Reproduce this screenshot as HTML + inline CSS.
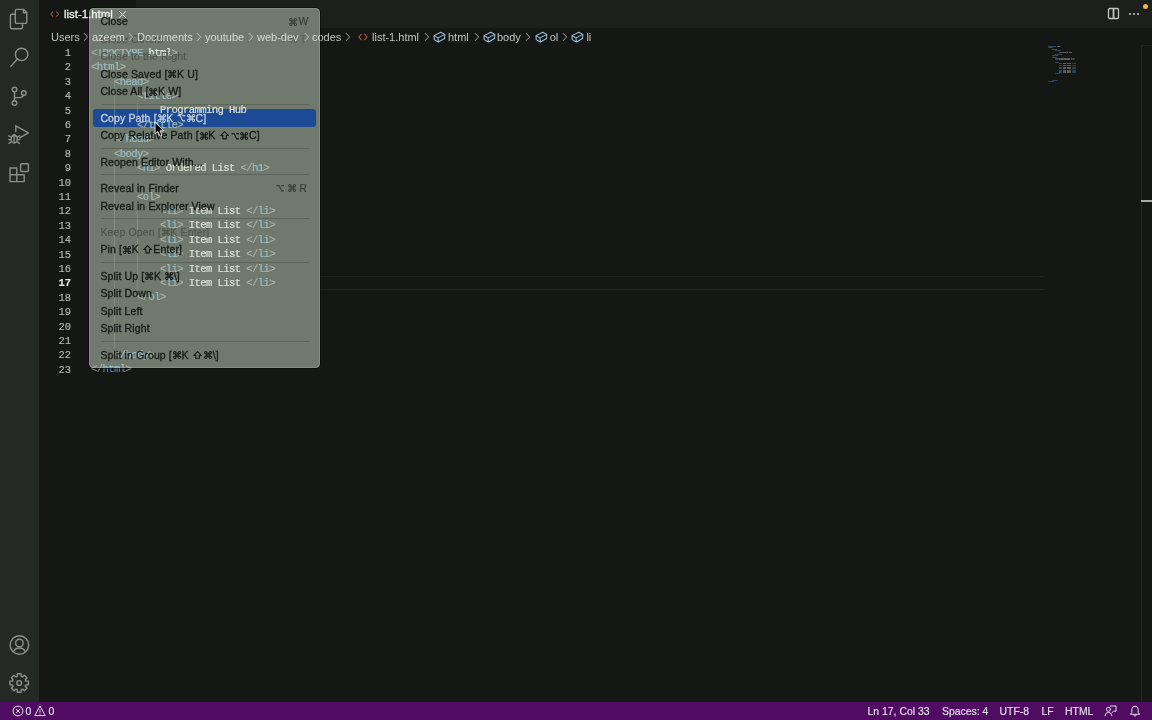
<!DOCTYPE html>
<html>
<head>
<meta charset="utf-8">
<style>
*{margin:0;padding:0;box-sizing:border-box}
html,body{width:1152px;height:720px;overflow:hidden;background:#151714;font-family:"Liberation Sans",sans-serif;position:relative}
body{will-change:transform}
.abs{position:absolute}
#act{left:0;top:0;width:39px;height:702px;background:#252925}
#tabs{left:39px;top:0;width:1113px;height:28px;background:#1d1f1d}
#tab{left:39px;top:0;width:97px;height:28px;background:#151714}
#status{left:0;top:702px;width:1152px;height:18px;background:#4f0c60;color:#e4d8ec;font-size:10.4px}
.st{top:705.9px;font-size:10.45px;-webkit-text-stroke:0.15px #e6dcee;color:#e6dcee;white-space:pre}
.ln{position:absolute;left:30px;width:41px;text-align:right;font-size:10.5px;line-height:14.39px;color:#b8bab7;font-family:"Liberation Mono",monospace;margin-top:0.3px;-webkit-text-stroke:0.12px currentColor}
.ln.cur{color:#e6e6e6;font-weight:bold}
.codewrap{position:absolute;left:0;top:0;width:1152px;height:720px}
.cl{position:absolute;left:91px;font-size:10.6px;letter-spacing:-0.61px;-webkit-text-stroke:0.22px currentColor;line-height:14.39px;white-space:pre;font-family:"Liberation Mono",monospace}
.base .p{color:#7f817f} .base .t{color:#4a7cb4} .base .a{color:#8fb8d8} .base .x{color:#d4d4d4}
.over .p{color:#a8b0a4} .over .t{color:#9cbcc0} .over .a{color:#e2e8e0} .over .x{color:#dadfd4}
.bcw{position:absolute;top:30.5px;font-size:11px;white-space:pre}
#menu{left:89px;top:8px;width:231px;height:360px;background:#6f796d;border-radius:4.5px;overflow:hidden;box-shadow:0 0 0 1px rgba(0,0,0,0.4)}
#rim{left:89px;top:8px;width:231px;height:360px;border-radius:4.5px;box-shadow:inset 0 0 0 1px rgba(200,210,195,0.25)}
#menu .inner{position:absolute;left:-89px;top:-8px;width:1152px;height:720px}
.mi{position:absolute;left:100.4px;-webkit-text-stroke:0.3px currentColor;letter-spacing:0.13px;font-size:10.5px;color:#1c201c;white-space:pre;line-height:12px}
.mi.dis{color:#4e564d}
.mi.hl{color:#cfd8e6}
.sc{position:absolute;-webkit-text-stroke:0.2px currentColor;font-size:10.5px;color:#3a403a;white-space:pre;line-height:12px}
.sep{position:absolute;left:101px;width:208px;height:1.2px;background:#5c6459}
#hl{left:93px;width:223px;height:17.3px;background:#1c4a95;border-radius:3px}
</style>
</head>
<body>
<div id="act" class="abs"></div>

<svg class="abs" style="left:0;top:0" width="38" height="702" viewBox="0 0 38 702" fill="none" stroke="#8c908c" stroke-width="1.4" stroke-linejoin="round" stroke-linecap="round">
 <!-- files -->
 <path d="M16.8 9.4 H23.6 L26.8 12.6 V21.9 Q26.8 23.4 25.3 23.4 H16.8 Q15.3 23.4 15.3 21.9 V10.9 Q15.3 9.4 16.8 9.4 Z"/>
 <path d="M23.4 9.6 V12.8 H26.6"/>
 <path d="M15.3 14.3 H12 Q10.4 14.3 10.4 15.9 V27.2 Q10.4 28.8 12 28.8 H20.9 Q22.5 28.8 22.5 27.2 V23.4"/>
 <!-- search -->
 <circle cx="21.6" cy="54.4" r="6.2"/>
 <path d="M17.3 59 L10.9 66.4"/>
 <!-- scm -->
 <circle cx="14.5" cy="89.5" r="2.3"/>
 <circle cx="14.5" cy="103" r="2.3"/>
 <circle cx="23.8" cy="93" r="2.3"/>
 <path d="M14.5 91.8 V100.7"/>
 <path d="M23.5 95.3 Q22.8 97.4 20 97.6 H14.6"/>
 <!-- run debug -->
 <path d="M15.8 125.8 L28.4 132.8 L19.8 137.8 M15.8 125.8 V131.5"/>
 <ellipse cx="14.2" cy="139.3" rx="3.1" ry="3.7"/>
 <path d="M11 137 L8.8 135.8 M17.4 137 L19.6 135.8 M10.6 139.6 H8.6 M17.8 139.6 H19.8 M11 142 L9 143.4 M17.4 142 L19.4 143.4 M12.2 135.9 Q14.2 133.6 16.2 135.9 M14.2 136 V142.6"/>
 <!-- extensions -->
 <path d="M10 168 H16.8 V181.6 H10 Z M10 174.8 H24.2 V181.6 H16.8"/>
 <rect x="20.6" y="163.7" width="7.8" height="7.8" rx="1"/>
 <!-- account -->
 <circle cx="19.4" cy="645" r="9.3"/>
 <circle cx="19.4" cy="643" r="3.8"/>
 <path d="M13.6 651.6 Q15 648 19.4 648 Q23.8 648 25.2 651.6"/>
 <!-- gear -->
 <circle cx="19.2" cy="683" r="2.4"/>
</svg>
<svg class="abs" style="left:0;top:0" width="38" height="702" fill="none" stroke="#8c908c" stroke-width="1.4" stroke-linejoin="round"><path d="M28.42 681.17 L28.42 684.83 L25.80 685.00 L25.29 686.25 L27.02 688.22 L24.42 690.82 L22.45 689.09 L21.20 689.60 L21.03 692.22 L17.37 692.22 L17.20 689.60 L15.95 689.09 L13.98 690.82 L11.38 688.22 L13.11 686.25 L12.60 685.00 L9.98 684.83 L9.98 681.17 L12.60 681.00 L13.11 679.75 L11.38 677.78 L13.98 675.18 L15.95 676.91 L17.20 676.40 L17.37 673.78 L21.03 673.78 L21.20 676.40 L22.45 676.91 L24.42 675.18 L27.02 677.78 L25.29 679.75 L25.80 681.00 Z"/></svg>
<div id="tabs" class="abs"></div>
<div id="tab" class="abs"></div>
<div id="status" class="abs"></div>
<svg class="abs" style="left:11.5px;top:704.8px" width="12" height="12" viewBox="0 0 12 12" fill="none" stroke="#e6dcee" stroke-width="1"><circle cx="6" cy="6" r="4.9"/><path d="M4 4 L8 8 M8 4 L4 8"/></svg><span class="abs st" style="left:25.5px">0</span><svg class="abs" style="left:34.3px;top:704.6px" width="12" height="12" viewBox="0 0 12 12" fill="none" stroke="#e6dcee" stroke-width="1" stroke-linejoin="round"><path d="M6 1 L11.2 10.6 H0.8 Z"/><path d="M6 4.6 V7.6 M6 8.6 V9.4"/></svg><span class="abs st" style="left:48.5px">0</span><span class="abs st" style="left:867.5px">Ln 17, Col 33</span><span class="abs st" style="left:942px">Spaces: 4</span><span class="abs st" style="left:999.5px">UTF-8</span><span class="abs st" style="left:1041.5px">LF</span><span class="abs st" style="left:1065px">HTML</span><svg class="abs" style="left:1104px;top:705px" width="13" height="12" viewBox="0 0 13 12" fill="none" stroke="#e6dcee" stroke-width="1" stroke-linejoin="round" stroke-linecap="round"><circle cx="4.5" cy="4.3" r="2"/><path d="M1 10.8 Q1.5 7.3 4.5 7.3 Q7.5 7.3 8 10.8"/><path d="M6.5 1 H12 V6.2 H9.5 L8 7.6"/></svg><svg class="abs" style="left:1129px;top:705px" width="12" height="12" viewBox="0 0 12 12" fill="none" stroke="#e6dcee" stroke-width="1" stroke-linejoin="round"><path d="M6 1.2 Q9.2 1.2 9.2 4.6 V7.6 L10.6 9.3 H1.4 L2.8 7.6 V4.6 Q2.8 1.2 6 1.2 Z"/><path d="M4.6 10.4 Q6 11.8 7.4 10.4"/></svg>
<svg class="abs" style="left:1107px;top:7px" width="13" height="13" viewBox="0 0 13 13" fill="none" stroke="#c4c6c4" stroke-width="1.3"><rect x="1.5" y="1.5" width="10" height="10" rx="1.2"/><path d="M6.5 1.5 V11.5" stroke-width="1.8"/></svg><div class="abs" style="left:1129.2px;top:13.2px;width:1.6px;height:1.6px;background:#c4c6c4;border-radius:1px"></div><div class="abs" style="left:1133.2px;top:13.2px;width:1.6px;height:1.6px;background:#c4c6c4;border-radius:1px"></div><div class="abs" style="left:1137.2px;top:13.2px;width:1.6px;height:1.6px;background:#c4c6c4;border-radius:1px"></div><div class="abs" style="left:1142.8px;top:3.7px;width:5.6px;height:5.6px;border-radius:3px;background:#ecb444"></div>
<div class="abs" style="left:320px;top:276.3px;width:724px;height:13.6px;border-top:1px solid #222422;border-bottom:1px solid #222422"></div>
<div class="abs" style="left:1140.5px;top:45px;width:1.2px;height:657px;background:#262826"></div>
<div class="abs" style="left:1141px;top:45px;width:11px;height:1px;background:#1f211f"></div>
<div class="abs" style="left:1141px;top:200px;width:11px;height:2px;background:#a8aaa8"></div>
<div class="abs" style="left:1048.00px;top:45.50px;width:0.88px;height:1.1px;background:#3a3c3a"></div><div class="abs" style="left:1048.88px;top:45.50px;width:7.04px;height:1.1px;background:#2e4a62"></div><div class="abs" style="left:1056.80px;top:45.50px;width:3.52px;height:1.1px;background:#4a6478"></div><div class="abs" style="left:1060.32px;top:45.50px;width:0.88px;height:1.1px;background:#3a3c3a"></div><div class="abs" style="left:1048.00px;top:47.12px;width:0.88px;height:1.1px;background:#3a3c3a"></div><div class="abs" style="left:1048.88px;top:47.12px;width:3.52px;height:1.1px;background:#2e4a62"></div><div class="abs" style="left:1052.40px;top:47.12px;width:0.88px;height:1.1px;background:#3a3c3a"></div><div class="abs" style="left:1051.52px;top:48.74px;width:0.88px;height:1.1px;background:#3a3c3a"></div><div class="abs" style="left:1052.40px;top:48.74px;width:3.52px;height:1.1px;background:#2e4a62"></div><div class="abs" style="left:1055.92px;top:48.74px;width:0.88px;height:1.1px;background:#3a3c3a"></div><div class="abs" style="left:1055.04px;top:50.36px;width:0.88px;height:1.1px;background:#3a3c3a"></div><div class="abs" style="left:1055.92px;top:50.36px;width:4.40px;height:1.1px;background:#2e4a62"></div><div class="abs" style="left:1060.32px;top:50.36px;width:0.88px;height:1.1px;background:#3a3c3a"></div><div class="abs" style="left:1058.56px;top:51.98px;width:9.68px;height:1.1px;background:#5a5c58"></div><div class="abs" style="left:1069.12px;top:51.98px;width:2.64px;height:1.1px;background:#5a5c58"></div><div class="abs" style="left:1055.04px;top:53.60px;width:1.76px;height:1.1px;background:#3a3c3a"></div><div class="abs" style="left:1056.80px;top:53.60px;width:4.40px;height:1.1px;background:#2e4a62"></div><div class="abs" style="left:1061.20px;top:53.60px;width:0.88px;height:1.1px;background:#3a3c3a"></div><div class="abs" style="left:1051.52px;top:55.22px;width:1.76px;height:1.1px;background:#3a3c3a"></div><div class="abs" style="left:1053.28px;top:55.22px;width:3.52px;height:1.1px;background:#2e4a62"></div><div class="abs" style="left:1056.80px;top:55.22px;width:0.88px;height:1.1px;background:#3a3c3a"></div><div class="abs" style="left:1051.52px;top:56.84px;width:0.88px;height:1.1px;background:#3a3c3a"></div><div class="abs" style="left:1052.40px;top:56.84px;width:3.52px;height:1.1px;background:#2e4a62"></div><div class="abs" style="left:1055.92px;top:56.84px;width:0.88px;height:1.1px;background:#3a3c3a"></div><div class="abs" style="left:1055.04px;top:58.46px;width:0.88px;height:1.1px;background:#3a3c3a"></div><div class="abs" style="left:1055.92px;top:58.46px;width:1.76px;height:1.1px;background:#2e4a62"></div><div class="abs" style="left:1057.68px;top:58.46px;width:0.88px;height:1.1px;background:#3a3c3a"></div><div class="abs" style="left:1059.44px;top:58.46px;width:6.16px;height:1.1px;background:#5a5c58"></div><div class="abs" style="left:1066.48px;top:58.46px;width:3.52px;height:1.1px;background:#5a5c58"></div><div class="abs" style="left:1070.88px;top:58.46px;width:1.76px;height:1.1px;background:#3a3c3a"></div><div class="abs" style="left:1072.64px;top:58.46px;width:1.76px;height:1.1px;background:#2e4a62"></div><div class="abs" style="left:1074.40px;top:58.46px;width:0.88px;height:1.1px;background:#3a3c3a"></div><div class="abs" style="left:1055.04px;top:61.70px;width:0.88px;height:1.1px;background:#3a3c3a"></div><div class="abs" style="left:1055.92px;top:61.70px;width:1.76px;height:1.1px;background:#2e4a62"></div><div class="abs" style="left:1057.68px;top:61.70px;width:0.88px;height:1.1px;background:#3a3c3a"></div><div class="abs" style="left:1058.56px;top:63.32px;width:0.88px;height:1.1px;background:#3a3c3a"></div><div class="abs" style="left:1059.44px;top:63.32px;width:1.76px;height:1.1px;background:#2e4a62"></div><div class="abs" style="left:1061.20px;top:63.32px;width:0.88px;height:1.1px;background:#3a3c3a"></div><div class="abs" style="left:1062.96px;top:63.32px;width:3.52px;height:1.1px;background:#5a5c58"></div><div class="abs" style="left:1067.36px;top:63.32px;width:3.52px;height:1.1px;background:#5a5c58"></div><div class="abs" style="left:1071.76px;top:63.32px;width:1.76px;height:1.1px;background:#3a3c3a"></div><div class="abs" style="left:1073.52px;top:63.32px;width:1.76px;height:1.1px;background:#2e4a62"></div><div class="abs" style="left:1075.28px;top:63.32px;width:0.88px;height:1.1px;background:#3a3c3a"></div><div class="abs" style="left:1058.56px;top:64.94px;width:0.88px;height:1.1px;background:#3a3c3a"></div><div class="abs" style="left:1059.44px;top:64.94px;width:1.76px;height:1.1px;background:#2e4a62"></div><div class="abs" style="left:1061.20px;top:64.94px;width:0.88px;height:1.1px;background:#3a3c3a"></div><div class="abs" style="left:1062.96px;top:64.94px;width:3.52px;height:1.1px;background:#5a5c58"></div><div class="abs" style="left:1067.36px;top:64.94px;width:3.52px;height:1.1px;background:#5a5c58"></div><div class="abs" style="left:1071.76px;top:64.94px;width:1.76px;height:1.1px;background:#3a3c3a"></div><div class="abs" style="left:1073.52px;top:64.94px;width:1.76px;height:1.1px;background:#2e4a62"></div><div class="abs" style="left:1075.28px;top:64.94px;width:0.88px;height:1.1px;background:#3a3c3a"></div><div class="abs" style="left:1058.56px;top:66.56px;width:0.88px;height:1.1px;background:#3a3c3a"></div><div class="abs" style="left:1059.44px;top:66.56px;width:1.76px;height:1.1px;background:#2e4a62"></div><div class="abs" style="left:1061.20px;top:66.56px;width:0.88px;height:1.1px;background:#3a3c3a"></div><div class="abs" style="left:1062.96px;top:66.56px;width:3.52px;height:1.1px;background:#5a5c58"></div><div class="abs" style="left:1067.36px;top:66.56px;width:3.52px;height:1.1px;background:#5a5c58"></div><div class="abs" style="left:1071.76px;top:66.56px;width:1.76px;height:1.1px;background:#3a3c3a"></div><div class="abs" style="left:1073.52px;top:66.56px;width:1.76px;height:1.1px;background:#2e4a62"></div><div class="abs" style="left:1075.28px;top:66.56px;width:0.88px;height:1.1px;background:#3a3c3a"></div><div class="abs" style="left:1058.56px;top:68.18px;width:0.88px;height:1.1px;background:#3a3c3a"></div><div class="abs" style="left:1059.44px;top:68.18px;width:1.76px;height:1.1px;background:#2e4a62"></div><div class="abs" style="left:1061.20px;top:68.18px;width:0.88px;height:1.1px;background:#3a3c3a"></div><div class="abs" style="left:1062.96px;top:68.18px;width:3.52px;height:1.1px;background:#5a5c58"></div><div class="abs" style="left:1067.36px;top:68.18px;width:3.52px;height:1.1px;background:#5a5c58"></div><div class="abs" style="left:1071.76px;top:68.18px;width:1.76px;height:1.1px;background:#3a3c3a"></div><div class="abs" style="left:1073.52px;top:68.18px;width:1.76px;height:1.1px;background:#2e4a62"></div><div class="abs" style="left:1075.28px;top:68.18px;width:0.88px;height:1.1px;background:#3a3c3a"></div><div class="abs" style="left:1058.56px;top:69.80px;width:0.88px;height:1.1px;background:#3a3c3a"></div><div class="abs" style="left:1059.44px;top:69.80px;width:1.76px;height:1.1px;background:#2e4a62"></div><div class="abs" style="left:1061.20px;top:69.80px;width:0.88px;height:1.1px;background:#3a3c3a"></div><div class="abs" style="left:1062.96px;top:69.80px;width:3.52px;height:1.1px;background:#5a5c58"></div><div class="abs" style="left:1067.36px;top:69.80px;width:3.52px;height:1.1px;background:#5a5c58"></div><div class="abs" style="left:1071.76px;top:69.80px;width:1.76px;height:1.1px;background:#3a3c3a"></div><div class="abs" style="left:1073.52px;top:69.80px;width:1.76px;height:1.1px;background:#2e4a62"></div><div class="abs" style="left:1075.28px;top:69.80px;width:0.88px;height:1.1px;background:#3a3c3a"></div><div class="abs" style="left:1058.56px;top:71.42px;width:0.88px;height:1.1px;background:#3a3c3a"></div><div class="abs" style="left:1059.44px;top:71.42px;width:1.76px;height:1.1px;background:#2e4a62"></div><div class="abs" style="left:1061.20px;top:71.42px;width:0.88px;height:1.1px;background:#3a3c3a"></div><div class="abs" style="left:1062.96px;top:71.42px;width:3.52px;height:1.1px;background:#5a5c58"></div><div class="abs" style="left:1067.36px;top:71.42px;width:3.52px;height:1.1px;background:#5a5c58"></div><div class="abs" style="left:1071.76px;top:71.42px;width:1.76px;height:1.1px;background:#3a3c3a"></div><div class="abs" style="left:1073.52px;top:71.42px;width:1.76px;height:1.1px;background:#2e4a62"></div><div class="abs" style="left:1075.28px;top:71.42px;width:0.88px;height:1.1px;background:#3a3c3a"></div><div class="abs" style="left:1055.04px;top:73.04px;width:1.76px;height:1.1px;background:#3a3c3a"></div><div class="abs" style="left:1056.80px;top:73.04px;width:1.76px;height:1.1px;background:#2e4a62"></div><div class="abs" style="left:1058.56px;top:73.04px;width:0.88px;height:1.1px;background:#3a3c3a"></div><div class="abs" style="left:1051.52px;top:79.52px;width:1.76px;height:1.1px;background:#3a3c3a"></div><div class="abs" style="left:1053.28px;top:79.52px;width:3.52px;height:1.1px;background:#2e4a62"></div><div class="abs" style="left:1056.80px;top:79.52px;width:0.88px;height:1.1px;background:#3a3c3a"></div><div class="abs" style="left:1048.00px;top:81.14px;width:1.76px;height:1.1px;background:#3a3c3a"></div><div class="abs" style="left:1049.76px;top:81.14px;width:3.52px;height:1.1px;background:#2e4a62"></div><div class="abs" style="left:1053.28px;top:81.14px;width:0.88px;height:1.1px;background:#3a3c3a"></div>
<div class="ln" style="top:45.80px">1</div><div class="ln" style="top:60.19px">2</div><div class="ln" style="top:74.58px">3</div><div class="ln" style="top:88.97px">4</div><div class="ln" style="top:103.36px">5</div><div class="ln" style="top:117.75px">6</div><div class="ln" style="top:132.14px">7</div><div class="ln" style="top:146.53px">8</div><div class="ln" style="top:160.92px">9</div><div class="ln" style="top:175.31px">10</div><div class="ln" style="top:189.70px">11</div><div class="ln" style="top:204.09px">12</div><div class="ln" style="top:218.48px">13</div><div class="ln" style="top:232.87px">14</div><div class="ln" style="top:247.26px">15</div><div class="ln" style="top:261.65px">16</div><div class="ln cur" style="top:276.04px">17</div><div class="ln" style="top:290.43px">18</div><div class="ln" style="top:304.82px">19</div><div class="ln" style="top:319.21px">20</div><div class="ln" style="top:333.60px">21</div><div class="ln" style="top:347.99px">22</div><div class="ln" style="top:362.38px">23</div>
<div class="codewrap base"><div class="cl" style="top:45.80px"><span class="p">&lt;</span><span class="t">!DOCTYPE</span> <span class="a">html</span><span class="p">&gt;</span></div><div class="cl" style="top:60.19px"><span class="p">&lt;</span><span class="t">html</span><span class="p">&gt;</span></div><div class="cl" style="top:74.58px">    <span class="p">&lt;</span><span class="t">head</span><span class="p">&gt;</span></div><div class="cl" style="top:88.97px">        <span class="p">&lt;</span><span class="t">title</span><span class="p">&gt;</span></div><div class="cl" style="top:103.36px">            <span class="x">Programming Hub</span></div><div class="cl" style="top:117.75px">        <span class="p">&lt;/</span><span class="t">title</span><span class="p">&gt;</span></div><div class="cl" style="top:132.14px">    <span class="p">&lt;/</span><span class="t">head</span><span class="p">&gt;</span></div><div class="cl" style="top:146.53px">    <span class="p">&lt;</span><span class="t">body</span><span class="p">&gt;</span></div><div class="cl" style="top:160.92px">        <span class="p">&lt;</span><span class="t">h1</span><span class="p">&gt;</span><span class="x"> Ordered List </span><span class="p">&lt;/</span><span class="t">h1</span><span class="p">&gt;</span></div><div class="cl" style="top:175.31px"></div><div class="cl" style="top:189.70px">        <span class="p">&lt;</span><span class="t">ol</span><span class="p">&gt;</span></div><div class="cl" style="top:204.09px">            <span class="p">&lt;</span><span class="t">li</span><span class="p">&gt;</span><span class="x"> Item List </span><span class="p">&lt;/</span><span class="t">li</span><span class="p">&gt;</span></div><div class="cl" style="top:218.48px">            <span class="p">&lt;</span><span class="t">li</span><span class="p">&gt;</span><span class="x"> Item List </span><span class="p">&lt;/</span><span class="t">li</span><span class="p">&gt;</span></div><div class="cl" style="top:232.87px">            <span class="p">&lt;</span><span class="t">li</span><span class="p">&gt;</span><span class="x"> Item List </span><span class="p">&lt;/</span><span class="t">li</span><span class="p">&gt;</span></div><div class="cl" style="top:247.26px">            <span class="p">&lt;</span><span class="t">li</span><span class="p">&gt;</span><span class="x"> Item List </span><span class="p">&lt;/</span><span class="t">li</span><span class="p">&gt;</span></div><div class="cl" style="top:261.65px">            <span class="p">&lt;</span><span class="t">li</span><span class="p">&gt;</span><span class="x"> Item List </span><span class="p">&lt;/</span><span class="t">li</span><span class="p">&gt;</span></div><div class="cl" style="top:276.04px">            <span class="p">&lt;</span><span class="t">li</span><span class="p">&gt;</span><span class="x"> Item List </span><span class="p">&lt;/</span><span class="t">li</span><span class="p">&gt;</span></div><div class="cl" style="top:290.43px">        <span class="p">&lt;/</span><span class="t">ol</span><span class="p">&gt;</span></div><div class="cl" style="top:304.82px"></div><div class="cl" style="top:319.21px"></div><div class="cl" style="top:333.60px"></div><div class="cl" style="top:347.99px">    <span class="p">&lt;/</span><span class="t">body</span><span class="p">&gt;</span></div><div class="cl" style="top:362.38px"><span class="p">&lt;/</span><span class="t">html</span><span class="p">&gt;</span></div></div>
<div id="bcbase" class="abs"><span class="bcw" style="left:51px;color:#c0c2c0">Users</span><span class="bcw" style="left:92px;color:#c0c2c0">azeem</span><span class="bcw" style="left:137px;color:#c0c2c0">Documents</span><span class="bcw" style="left:205px;color:#c0c2c0">youtube</span><span class="bcw" style="left:257px;color:#c0c2c0">web-dev</span><span class="bcw" style="left:312px;color:#c0c2c0">codes</span><span class="bcw" style="left:372px;color:#c0c2c0">list-1.html</span><span class="bcw" style="left:448px;color:#c0c2c0">html</span><span class="bcw" style="left:497px;color:#c0c2c0">body</span><span class="bcw" style="left:549.7px;color:#c0c2c0">ol</span><span class="bcw" style="left:586.4px;color:#c0c2c0">li</span><svg class="abs" style="left:83px;top:32px" width="6" height="10" viewBox="0 0 6 10" fill="none" stroke="#a0a2a0" stroke-width="1"><path d="M1 1.2 L4.6 5 L1 8.8"/></svg><svg class="abs" style="left:128px;top:32px" width="6" height="10" viewBox="0 0 6 10" fill="none" stroke="#a0a2a0" stroke-width="1"><path d="M1 1.2 L4.6 5 L1 8.8"/></svg><svg class="abs" style="left:195.5px;top:32px" width="6" height="10" viewBox="0 0 6 10" fill="none" stroke="#a0a2a0" stroke-width="1"><path d="M1 1.2 L4.6 5 L1 8.8"/></svg><svg class="abs" style="left:247.5px;top:32px" width="6" height="10" viewBox="0 0 6 10" fill="none" stroke="#a0a2a0" stroke-width="1"><path d="M1 1.2 L4.6 5 L1 8.8"/></svg><svg class="abs" style="left:303.5px;top:32px" width="6" height="10" viewBox="0 0 6 10" fill="none" stroke="#a0a2a0" stroke-width="1"><path d="M1 1.2 L4.6 5 L1 8.8"/></svg><svg class="abs" style="left:344.8px;top:32px" width="6" height="10" viewBox="0 0 6 10" fill="none" stroke="#a0a2a0" stroke-width="1"><path d="M1 1.2 L4.6 5 L1 8.8"/></svg><svg class="abs" style="left:423.5px;top:32px" width="6" height="10" viewBox="0 0 6 10" fill="none" stroke="#a0a2a0" stroke-width="1"><path d="M1 1.2 L4.6 5 L1 8.8"/></svg><svg class="abs" style="left:473.5px;top:32px" width="6" height="10" viewBox="0 0 6 10" fill="none" stroke="#a0a2a0" stroke-width="1"><path d="M1 1.2 L4.6 5 L1 8.8"/></svg><svg class="abs" style="left:524.8px;top:32px" width="6" height="10" viewBox="0 0 6 10" fill="none" stroke="#a0a2a0" stroke-width="1"><path d="M1 1.2 L4.6 5 L1 8.8"/></svg><svg class="abs" style="left:562px;top:32px" width="6" height="10" viewBox="0 0 6 10" fill="none" stroke="#a0a2a0" stroke-width="1"><path d="M1 1.2 L4.6 5 L1 8.8"/></svg><svg class="abs" style="left:357.5px;top:33.2px" width="10" height="8" viewBox="0 0 10 8" fill="none" stroke="#a85545" stroke-width="1.15"><path d="M3.6 0.8 L0.9 4 L3.6 7.2 M6.4 0.8 L9.1 4 L6.4 7.2"/></svg><svg class="abs" style="left:432.7px;top:31px" width="13" height="12" viewBox="0 0 13 12" fill="none" stroke="#9cc0dc" stroke-width="1.05" stroke-linejoin="round"><path d="M1 4.6 L7.8 1.2 L11.8 3.4 L5 6.9 Z M1 4.6 L1.2 8.6 L5.3 11 L11.6 7.5 L11.8 3.4 M5 6.9 L5.3 11"/></svg><svg class="abs" style="left:482.7px;top:31px" width="13" height="12" viewBox="0 0 13 12" fill="none" stroke="#9cc0dc" stroke-width="1.05" stroke-linejoin="round"><path d="M1 4.6 L7.8 1.2 L11.8 3.4 L5 6.9 Z M1 4.6 L1.2 8.6 L5.3 11 L11.6 7.5 L11.8 3.4 M5 6.9 L5.3 11"/></svg><svg class="abs" style="left:534.7px;top:31px" width="13" height="12" viewBox="0 0 13 12" fill="none" stroke="#9cc0dc" stroke-width="1.05" stroke-linejoin="round"><path d="M1 4.6 L7.8 1.2 L11.8 3.4 L5 6.9 Z M1 4.6 L1.2 8.6 L5.3 11 L11.6 7.5 L11.8 3.4 M5 6.9 L5.3 11"/></svg><svg class="abs" style="left:571.2px;top:31px" width="13" height="12" viewBox="0 0 13 12" fill="none" stroke="#9cc0dc" stroke-width="1.05" stroke-linejoin="round"><path d="M1 4.6 L7.8 1.2 L11.8 3.4 L5 6.9 Z M1 4.6 L1.2 8.6 L5.3 11 L11.6 7.5 L11.8 3.4 M5 6.9 L5.3 11"/></svg></div>
<svg class="abs" style="left:49.6px;top:11.2px" width="9.4" height="6.2" viewBox="0 0 9.4 6.2" fill="none" stroke="#9a5040" stroke-width="1.05"><path d="M3.1 0.5 L0.8 3.1 L3.1 5.7 M6.3 0.5 L8.6 3.1 L6.3 5.7"/></svg><span class="abs" style="left:64px;top:7.9px;font-size:11.4px;color:#f2f2f2;white-space:pre;-webkit-text-stroke:0.3px #f2f2f2">list-1.html</span><svg class="abs" style="left:118px;top:9.5px" width="9" height="9" viewBox="0 0 9 9" fill="none" stroke="#e8e8e8" stroke-width="1"><path d="M1 1 L8 8 M8 1 L1 8"/></svg>
<div id="menu" class="abs"><div class="inner">
<div class="sep" style="top:103.98px"></div><div class="abs" id="hl" style="top:109.27px"></div><div class="sep" style="top:147.88px"></div><div class="sep" style="top:174.23px"></div><div class="sep" style="top:218.13px"></div><div class="sep" style="top:262.03px"></div><div class="sep" style="top:341.03px"></div>
<div class="abs" style="left:113.6px;top:74.6px;width:1px;height:57.6px;background:rgba(160,170,158,0.4)"></div>
<div class="abs" style="left:113.6px;top:160.9px;width:1px;height:187.1px;background:rgba(160,170,158,0.4)"></div>
<div class="abs" style="left:136.6px;top:103.4px;width:1px;height:14.4px;background:rgba(160,170,158,0.4)"></div>
<div class="abs" style="left:136.6px;top:204.1px;width:1px;height:86.3px;background:rgba(160,170,158,0.4)"></div>
<div class="codewrap over"><div class="cl" style="top:45.80px"><span class="p">&lt;</span><span class="t">!DOCTYPE</span> <span class="a">html</span><span class="p">&gt;</span></div><div class="cl" style="top:60.19px"><span class="p">&lt;</span><span class="t">html</span><span class="p">&gt;</span></div><div class="cl" style="top:74.58px">    <span class="p">&lt;</span><span class="t">head</span><span class="p">&gt;</span></div><div class="cl" style="top:88.97px">        <span class="p">&lt;</span><span class="t">title</span><span class="p">&gt;</span></div><div class="cl" style="top:103.36px">            <span class="x">Programming Hub</span></div><div class="cl" style="top:117.75px">        <span class="p">&lt;/</span><span class="t">title</span><span class="p">&gt;</span></div><div class="cl" style="top:132.14px">    <span class="p">&lt;/</span><span class="t">head</span><span class="p">&gt;</span></div><div class="cl" style="top:146.53px">    <span class="p">&lt;</span><span class="t">body</span><span class="p">&gt;</span></div><div class="cl" style="top:160.92px">        <span class="p">&lt;</span><span class="t">h1</span><span class="p">&gt;</span><span class="x"> Ordered List </span><span class="p">&lt;/</span><span class="t">h1</span><span class="p">&gt;</span></div><div class="cl" style="top:175.31px"></div><div class="cl" style="top:189.70px">        <span class="p">&lt;</span><span class="t">ol</span><span class="p">&gt;</span></div><div class="cl" style="top:204.09px">            <span class="p">&lt;</span><span class="t">li</span><span class="p">&gt;</span><span class="x"> Item List </span><span class="p">&lt;/</span><span class="t">li</span><span class="p">&gt;</span></div><div class="cl" style="top:218.48px">            <span class="p">&lt;</span><span class="t">li</span><span class="p">&gt;</span><span class="x"> Item List </span><span class="p">&lt;/</span><span class="t">li</span><span class="p">&gt;</span></div><div class="cl" style="top:232.87px">            <span class="p">&lt;</span><span class="t">li</span><span class="p">&gt;</span><span class="x"> Item List </span><span class="p">&lt;/</span><span class="t">li</span><span class="p">&gt;</span></div><div class="cl" style="top:247.26px">            <span class="p">&lt;</span><span class="t">li</span><span class="p">&gt;</span><span class="x"> Item List </span><span class="p">&lt;/</span><span class="t">li</span><span class="p">&gt;</span></div><div class="cl" style="top:261.65px">            <span class="p">&lt;</span><span class="t">li</span><span class="p">&gt;</span><span class="x"> Item List </span><span class="p">&lt;/</span><span class="t">li</span><span class="p">&gt;</span></div><div class="cl" style="top:276.04px">            <span class="p">&lt;</span><span class="t">li</span><span class="p">&gt;</span><span class="x"> Item List </span><span class="p">&lt;/</span><span class="t">li</span><span class="p">&gt;</span></div><div class="cl" style="top:290.43px">        <span class="p">&lt;/</span><span class="t">ol</span><span class="p">&gt;</span></div><div class="cl" style="top:304.82px"></div><div class="cl" style="top:319.21px"></div><div class="cl" style="top:333.60px"></div><div class="cl" style="top:347.99px">    <span class="p">&lt;/</span><span class="t">body</span><span class="p">&gt;</span></div><div class="cl" style="top:362.38px"><span class="p">&lt;/</span><span class="t">html</span><span class="p">&gt;</span></div></div>
<svg class="abs" style="left:49.6px;top:11.2px" width="9.4" height="6.2" viewBox="0 0 9.4 6.2" fill="none" stroke="#9a5040" stroke-width="1.05"><path d="M3.1 0.5 L0.8 3.1 L3.1 5.7 M6.3 0.5 L8.6 3.1 L6.3 5.7"/></svg><span class="abs" style="left:64px;top:7.9px;font-size:11.4px;color:#f0f0f0;white-space:pre;-webkit-text-stroke:0.3px #f0f0f0">list-1.html</span><svg class="abs" style="left:118px;top:9.5px" width="9" height="9" viewBox="0 0 9 9" fill="none" stroke="#e8e8e8" stroke-width="1"><path d="M1 1 L8 8 M8 1 L1 8"/></svg>
<div class="mi" style="top:15.20px;color:#141814">Close</div><div class="sc" style="top:15.00px;right:843.7px;color:#384038"><span style="display:inline-block;margin-right:1.0px"><svg width="8.2" height="8" viewBox="0 0 10 10" style="vertical-align:-0.5px;margin:0 0.5px 0 0.9px" fill="none" stroke="#384038" stroke-width="1.3"><path d="M3.6 3.6 V2.2 A1.45 1.45 0 1 0 2.2 3.6 H7.8 A1.45 1.45 0 1 0 6.4 2.2 V7.8 A1.45 1.45 0 1 0 7.8 6.4 H2.2 A1.45 1.45 0 1 0 3.6 7.8 Z"/></svg></span><span style="display:inline-block;margin-right:0">W</span></div><div class="mi" style="top:32.75px;color:#4d554c;-webkit-text-stroke:0.12px currentColor">Close Others</div><div class="sc" style="top:32.55px;right:845.5px;color:#5a6359"><span style="display:inline-block;margin-right:2.2px"><svg width="8.6" height="8" viewBox="0 0 10 10" style="vertical-align:-0.5px;margin:0 0.3px 0 0.6px" fill="none" stroke="#5a6359" stroke-width="1.35"><path d="M0.3 2 H3.6 L6.8 8.6 H9.9 M6.2 2 H9.9"/></svg></span><span style="display:inline-block;margin-right:2.2px"><svg width="8.2" height="8" viewBox="0 0 10 10" style="vertical-align:-0.5px;margin:0 0.5px 0 0.9px" fill="none" stroke="#5a6359" stroke-width="1.3"><path d="M3.6 3.6 V2.2 A1.45 1.45 0 1 0 2.2 3.6 H7.8 A1.45 1.45 0 1 0 6.4 2.2 V7.8 A1.45 1.45 0 1 0 7.8 6.4 H2.2 A1.45 1.45 0 1 0 3.6 7.8 Z"/></svg></span><span style="display:inline-block;margin-right:0">T</span></div><div class="mi" style="top:50.30px;color:#4d554c;-webkit-text-stroke:0.12px currentColor">Close to the Right</div><div class="mi" style="top:67.85px;color:#141814">Close Saved [<svg width="8.2" height="8" viewBox="0 0 10 10" style="vertical-align:-0.5px;margin:0 0.5px 0 0.9px" fill="none" stroke="#141814" stroke-width="1.3"><path d="M3.6 3.6 V2.2 A1.45 1.45 0 1 0 2.2 3.6 H7.8 A1.45 1.45 0 1 0 6.4 2.2 V7.8 A1.45 1.45 0 1 0 7.8 6.4 H2.2 A1.45 1.45 0 1 0 3.6 7.8 Z"/></svg>K U]</div><div class="mi" style="top:85.40px;color:#141814">Close All [<svg width="8.2" height="8" viewBox="0 0 10 10" style="vertical-align:-0.5px;margin:0 0.5px 0 0.9px" fill="none" stroke="#141814" stroke-width="1.3"><path d="M3.6 3.6 V2.2 A1.45 1.45 0 1 0 2.2 3.6 H7.8 A1.45 1.45 0 1 0 6.4 2.2 V7.8 A1.45 1.45 0 1 0 7.8 6.4 H2.2 A1.45 1.45 0 1 0 3.6 7.8 Z"/></svg>K W]</div><div class="mi" style="top:111.75px;color:#c8d2e2">Copy Path [<svg width="8.2" height="8" viewBox="0 0 10 10" style="vertical-align:-0.5px;margin:0 0.5px 0 0.9px" fill="none" stroke="#c8d2e2" stroke-width="1.3"><path d="M3.6 3.6 V2.2 A1.45 1.45 0 1 0 2.2 3.6 H7.8 A1.45 1.45 0 1 0 6.4 2.2 V7.8 A1.45 1.45 0 1 0 7.8 6.4 H2.2 A1.45 1.45 0 1 0 3.6 7.8 Z"/></svg>K <svg width="8.6" height="8" viewBox="0 0 10 10" style="vertical-align:-0.5px;margin:0 0.3px 0 0.6px" fill="none" stroke="#c8d2e2" stroke-width="1.35"><path d="M0.3 2 H3.6 L6.8 8.6 H9.9 M6.2 2 H9.9"/></svg><svg width="8.2" height="8" viewBox="0 0 10 10" style="vertical-align:-0.5px;margin:0 0.5px 0 0.9px" fill="none" stroke="#c8d2e2" stroke-width="1.3"><path d="M3.6 3.6 V2.2 A1.45 1.45 0 1 0 2.2 3.6 H7.8 A1.45 1.45 0 1 0 6.4 2.2 V7.8 A1.45 1.45 0 1 0 7.8 6.4 H2.2 A1.45 1.45 0 1 0 3.6 7.8 Z"/></svg>C]</div><div class="mi" style="top:129.30px;color:#141814">Copy Relative Path [<svg width="8.2" height="8" viewBox="0 0 10 10" style="vertical-align:-0.5px;margin:0 0.5px 0 0.9px" fill="none" stroke="#141814" stroke-width="1.3"><path d="M3.6 3.6 V2.2 A1.45 1.45 0 1 0 2.2 3.6 H7.8 A1.45 1.45 0 1 0 6.4 2.2 V7.8 A1.45 1.45 0 1 0 7.8 6.4 H2.2 A1.45 1.45 0 1 0 3.6 7.8 Z"/></svg>K <svg width="9.2" height="8.6" viewBox="0 0 10 10" style="vertical-align:-0.5px;margin:0 1px 0 1.3px" fill="none" stroke="#141814" stroke-width="1.3" stroke-linejoin="round"><path d="M5 0.8 L9.5 5.3 H7 V9.2 H3 V5.3 H0.5 Z"/></svg><svg width="8.6" height="8" viewBox="0 0 10 10" style="vertical-align:-0.5px;margin:0 0.3px 0 0.6px" fill="none" stroke="#141814" stroke-width="1.35"><path d="M0.3 2 H3.6 L6.8 8.6 H9.9 M6.2 2 H9.9"/></svg><svg width="8.2" height="8" viewBox="0 0 10 10" style="vertical-align:-0.5px;margin:0 0.5px 0 0.9px" fill="none" stroke="#141814" stroke-width="1.3"><path d="M3.6 3.6 V2.2 A1.45 1.45 0 1 0 2.2 3.6 H7.8 A1.45 1.45 0 1 0 6.4 2.2 V7.8 A1.45 1.45 0 1 0 7.8 6.4 H2.2 A1.45 1.45 0 1 0 3.6 7.8 Z"/></svg>C]</div><div class="mi" style="top:155.65px;color:#141814">Reopen Editor With...</div><div class="mi" style="top:182.00px;color:#141814">Reveal in Finder</div><div class="sc" style="top:181.80px;right:845.1px;color:#384038"><span style="display:inline-block;margin-right:2.6px"><svg width="8.6" height="8" viewBox="0 0 10 10" style="vertical-align:-0.5px;margin:0 0.3px 0 0.6px" fill="none" stroke="#384038" stroke-width="1.35"><path d="M0.3 2 H3.6 L6.8 8.6 H9.9 M6.2 2 H9.9"/></svg></span><span style="display:inline-block;margin-right:2.6px"><svg width="8.2" height="8" viewBox="0 0 10 10" style="vertical-align:-0.5px;margin:0 0.5px 0 0.9px" fill="none" stroke="#384038" stroke-width="1.3"><path d="M3.6 3.6 V2.2 A1.45 1.45 0 1 0 2.2 3.6 H7.8 A1.45 1.45 0 1 0 6.4 2.2 V7.8 A1.45 1.45 0 1 0 7.8 6.4 H2.2 A1.45 1.45 0 1 0 3.6 7.8 Z"/></svg></span><span style="display:inline-block;margin-right:0">R</span></div><div class="mi" style="top:199.55px;color:#141814">Reveal in Explorer View</div><div class="mi" style="top:225.90px;color:#4d554c;-webkit-text-stroke:0.12px currentColor">Keep Open [<svg width="8.2" height="8" viewBox="0 0 10 10" style="vertical-align:-0.5px;margin:0 0.5px 0 0.9px" fill="none" stroke="#4d554c" stroke-width="1.3"><path d="M3.6 3.6 V2.2 A1.45 1.45 0 1 0 2.2 3.6 H7.8 A1.45 1.45 0 1 0 6.4 2.2 V7.8 A1.45 1.45 0 1 0 7.8 6.4 H2.2 A1.45 1.45 0 1 0 3.6 7.8 Z"/></svg>K Enter]</div><div class="mi" style="top:243.45px;color:#141814">Pin [<svg width="8.2" height="8" viewBox="0 0 10 10" style="vertical-align:-0.5px;margin:0 0.5px 0 0.9px" fill="none" stroke="#141814" stroke-width="1.3"><path d="M3.6 3.6 V2.2 A1.45 1.45 0 1 0 2.2 3.6 H7.8 A1.45 1.45 0 1 0 6.4 2.2 V7.8 A1.45 1.45 0 1 0 7.8 6.4 H2.2 A1.45 1.45 0 1 0 3.6 7.8 Z"/></svg>K <svg width="9.2" height="8.6" viewBox="0 0 10 10" style="vertical-align:-0.5px;margin:0 1px 0 1.3px" fill="none" stroke="#141814" stroke-width="1.3" stroke-linejoin="round"><path d="M5 0.8 L9.5 5.3 H7 V9.2 H3 V5.3 H0.5 Z"/></svg>Enter]</div><div class="mi" style="top:269.80px;color:#141814">Split Up [<svg width="8.2" height="8" viewBox="0 0 10 10" style="vertical-align:-0.5px;margin:0 0.5px 0 0.9px" fill="none" stroke="#141814" stroke-width="1.3"><path d="M3.6 3.6 V2.2 A1.45 1.45 0 1 0 2.2 3.6 H7.8 A1.45 1.45 0 1 0 6.4 2.2 V7.8 A1.45 1.45 0 1 0 7.8 6.4 H2.2 A1.45 1.45 0 1 0 3.6 7.8 Z"/></svg>K <svg width="8.2" height="8" viewBox="0 0 10 10" style="vertical-align:-0.5px;margin:0 0.5px 0 0.9px" fill="none" stroke="#141814" stroke-width="1.3"><path d="M3.6 3.6 V2.2 A1.45 1.45 0 1 0 2.2 3.6 H7.8 A1.45 1.45 0 1 0 6.4 2.2 V7.8 A1.45 1.45 0 1 0 7.8 6.4 H2.2 A1.45 1.45 0 1 0 3.6 7.8 Z"/></svg>\]</div><div class="mi" style="top:287.35px;color:#141814">Split Down</div><div class="mi" style="top:304.90px;color:#141814">Split Left</div><div class="mi" style="top:322.45px;color:#141814">Split Right</div><div class="mi" style="top:348.80px;color:#141814">Split in Group [<svg width="8.2" height="8" viewBox="0 0 10 10" style="vertical-align:-0.5px;margin:0 0.5px 0 0.9px" fill="none" stroke="#141814" stroke-width="1.3"><path d="M3.6 3.6 V2.2 A1.45 1.45 0 1 0 2.2 3.6 H7.8 A1.45 1.45 0 1 0 6.4 2.2 V7.8 A1.45 1.45 0 1 0 7.8 6.4 H2.2 A1.45 1.45 0 1 0 3.6 7.8 Z"/></svg>K <svg width="9.2" height="8.6" viewBox="0 0 10 10" style="vertical-align:-0.5px;margin:0 1px 0 1.3px" fill="none" stroke="#141814" stroke-width="1.3" stroke-linejoin="round"><path d="M5 0.8 L9.5 5.3 H7 V9.2 H3 V5.3 H0.5 Z"/></svg><svg width="8.2" height="8" viewBox="0 0 10 10" style="vertical-align:-0.5px;margin:0 0.5px 0 0.9px" fill="none" stroke="#141814" stroke-width="1.3"><path d="M3.6 3.6 V2.2 A1.45 1.45 0 1 0 2.2 3.6 H7.8 A1.45 1.45 0 1 0 6.4 2.2 V7.8 A1.45 1.45 0 1 0 7.8 6.4 H2.2 A1.45 1.45 0 1 0 3.6 7.8 Z"/></svg>\]</div>
<div class="abs"><span class="bcw" style="left:51px;color:#d6dad2">Users</span><span class="bcw" style="left:92px;color:#d6dad2">azeem</span><span class="bcw" style="left:137px;color:#d6dad2">Documents</span><span class="bcw" style="left:205px;color:#d6dad2">youtube</span><span class="bcw" style="left:257px;color:#d6dad2">web-dev</span><span class="bcw" style="left:312px;color:#d6dad2">codes</span><span class="bcw" style="left:372px;color:#d6dad2">list-1.html</span><span class="bcw" style="left:448px;color:#d6dad2">html</span><span class="bcw" style="left:497px;color:#d6dad2">body</span><span class="bcw" style="left:549.7px;color:#d6dad2">ol</span><span class="bcw" style="left:586.4px;color:#d6dad2">li</span><svg class="abs" style="left:83px;top:32px" width="6" height="10" viewBox="0 0 6 10" fill="none" stroke="#c4c8c0" stroke-width="1"><path d="M1 1.2 L4.6 5 L1 8.8"/></svg><svg class="abs" style="left:128px;top:32px" width="6" height="10" viewBox="0 0 6 10" fill="none" stroke="#c4c8c0" stroke-width="1"><path d="M1 1.2 L4.6 5 L1 8.8"/></svg><svg class="abs" style="left:195.5px;top:32px" width="6" height="10" viewBox="0 0 6 10" fill="none" stroke="#c4c8c0" stroke-width="1"><path d="M1 1.2 L4.6 5 L1 8.8"/></svg><svg class="abs" style="left:247.5px;top:32px" width="6" height="10" viewBox="0 0 6 10" fill="none" stroke="#c4c8c0" stroke-width="1"><path d="M1 1.2 L4.6 5 L1 8.8"/></svg><svg class="abs" style="left:303.5px;top:32px" width="6" height="10" viewBox="0 0 6 10" fill="none" stroke="#c4c8c0" stroke-width="1"><path d="M1 1.2 L4.6 5 L1 8.8"/></svg><svg class="abs" style="left:344.8px;top:32px" width="6" height="10" viewBox="0 0 6 10" fill="none" stroke="#c4c8c0" stroke-width="1"><path d="M1 1.2 L4.6 5 L1 8.8"/></svg><svg class="abs" style="left:423.5px;top:32px" width="6" height="10" viewBox="0 0 6 10" fill="none" stroke="#c4c8c0" stroke-width="1"><path d="M1 1.2 L4.6 5 L1 8.8"/></svg><svg class="abs" style="left:473.5px;top:32px" width="6" height="10" viewBox="0 0 6 10" fill="none" stroke="#c4c8c0" stroke-width="1"><path d="M1 1.2 L4.6 5 L1 8.8"/></svg><svg class="abs" style="left:524.8px;top:32px" width="6" height="10" viewBox="0 0 6 10" fill="none" stroke="#c4c8c0" stroke-width="1"><path d="M1 1.2 L4.6 5 L1 8.8"/></svg><svg class="abs" style="left:562px;top:32px" width="6" height="10" viewBox="0 0 6 10" fill="none" stroke="#c4c8c0" stroke-width="1"><path d="M1 1.2 L4.6 5 L1 8.8"/></svg><svg class="abs" style="left:357.5px;top:33.2px" width="10" height="8" viewBox="0 0 10 8" fill="none" stroke="#b08070" stroke-width="1.15"><path d="M3.6 0.8 L0.9 4 L3.6 7.2 M6.4 0.8 L9.1 4 L6.4 7.2"/></svg><svg class="abs" style="left:432.7px;top:31px" width="13" height="12" viewBox="0 0 13 12" fill="none" stroke="#b8d0e0" stroke-width="1.05" stroke-linejoin="round"><path d="M1 4.6 L7.8 1.2 L11.8 3.4 L5 6.9 Z M1 4.6 L1.2 8.6 L5.3 11 L11.6 7.5 L11.8 3.4 M5 6.9 L5.3 11"/></svg><svg class="abs" style="left:482.7px;top:31px" width="13" height="12" viewBox="0 0 13 12" fill="none" stroke="#b8d0e0" stroke-width="1.05" stroke-linejoin="round"><path d="M1 4.6 L7.8 1.2 L11.8 3.4 L5 6.9 Z M1 4.6 L1.2 8.6 L5.3 11 L11.6 7.5 L11.8 3.4 M5 6.9 L5.3 11"/></svg><svg class="abs" style="left:534.7px;top:31px" width="13" height="12" viewBox="0 0 13 12" fill="none" stroke="#b8d0e0" stroke-width="1.05" stroke-linejoin="round"><path d="M1 4.6 L7.8 1.2 L11.8 3.4 L5 6.9 Z M1 4.6 L1.2 8.6 L5.3 11 L11.6 7.5 L11.8 3.4 M5 6.9 L5.3 11"/></svg><svg class="abs" style="left:571.2px;top:31px" width="13" height="12" viewBox="0 0 13 12" fill="none" stroke="#b8d0e0" stroke-width="1.05" stroke-linejoin="round"><path d="M1 4.6 L7.8 1.2 L11.8 3.4 L5 6.9 Z M1 4.6 L1.2 8.6 L5.3 11 L11.6 7.5 L11.8 3.4 M5 6.9 L5.3 11"/></svg></div>
</div></div>
<div id="rim" class="abs"></div>
<svg class="abs" style="left:154px;top:120.8px" width="12" height="17" viewBox="0 0 12 17"><path d="M1 1 L1 13.2 L3.9 10.5 L6 15.2 L8 14.3 L6 9.8 L9.9 9.8 Z" fill="#0a0a0a" stroke="#f0f0f0" stroke-width="0.9" stroke-linejoin="round"/></svg>
</body>
</html>
